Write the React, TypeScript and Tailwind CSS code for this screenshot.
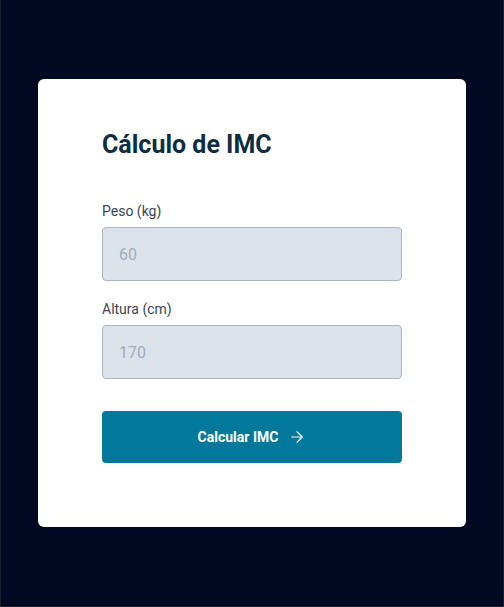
import { useState } from "react";
import { ArrowRight } from "lucide-react";

const App = () => {
  const [peso, setPeso] = useState("");
  const [altura, setAltura] = useState("");

  return (
    <div
      className="min-h-screen flex items-center justify-center bg-[#030822] border-x border-b border-[#1b1f28]"
      style={{ fontFamily: "Roboto, 'Liberation Sans', sans-serif" }}
    >
      <div className="w-[428px] bg-white rounded-md pt-[50px] px-16 pb-16">
        <h1 className="text-[25px] leading-8 font-bold text-[#0f2d3f] mb-10">
          Cálculo de IMC
        </h1>

        {/* Peso */}
        <label className="block text-sm leading-5 text-[#3b4650] mb-1.5">
          Peso (kg)
        </label>
        <input
          type="number"
          value={peso}
          onChange={(e) => setPeso(e.target.value)}
          placeholder="60"
          className="block w-full h-[54px] px-4 text-base bg-[#dbe2ea] border border-[#acb5c1] rounded text-[#1f2937] placeholder:text-[#a3adba] outline-none"
        />

        {/* Altura */}
        <label className="block text-sm leading-5 text-[#3b4650] mt-[18px] mb-1.5">
          Altura (cm)
        </label>
        <input
          type="number"
          value={altura}
          onChange={(e) => setAltura(e.target.value)}
          placeholder="170"
          className="block w-full h-[54px] px-4 text-base bg-[#dbe2ea] border border-[#acb5c1] rounded text-[#1f2937] placeholder:text-[#a3adba] outline-none"
        />

        <button className="mt-8 w-full h-[52px] flex items-center justify-center gap-2.5 bg-[#02789b] rounded text-white text-sm font-bold">
          Calcular IMC
          <ArrowRight size={18} strokeWidth={1.5} />
        </button>
      </div>
    </div>
  );
};

export default App;
